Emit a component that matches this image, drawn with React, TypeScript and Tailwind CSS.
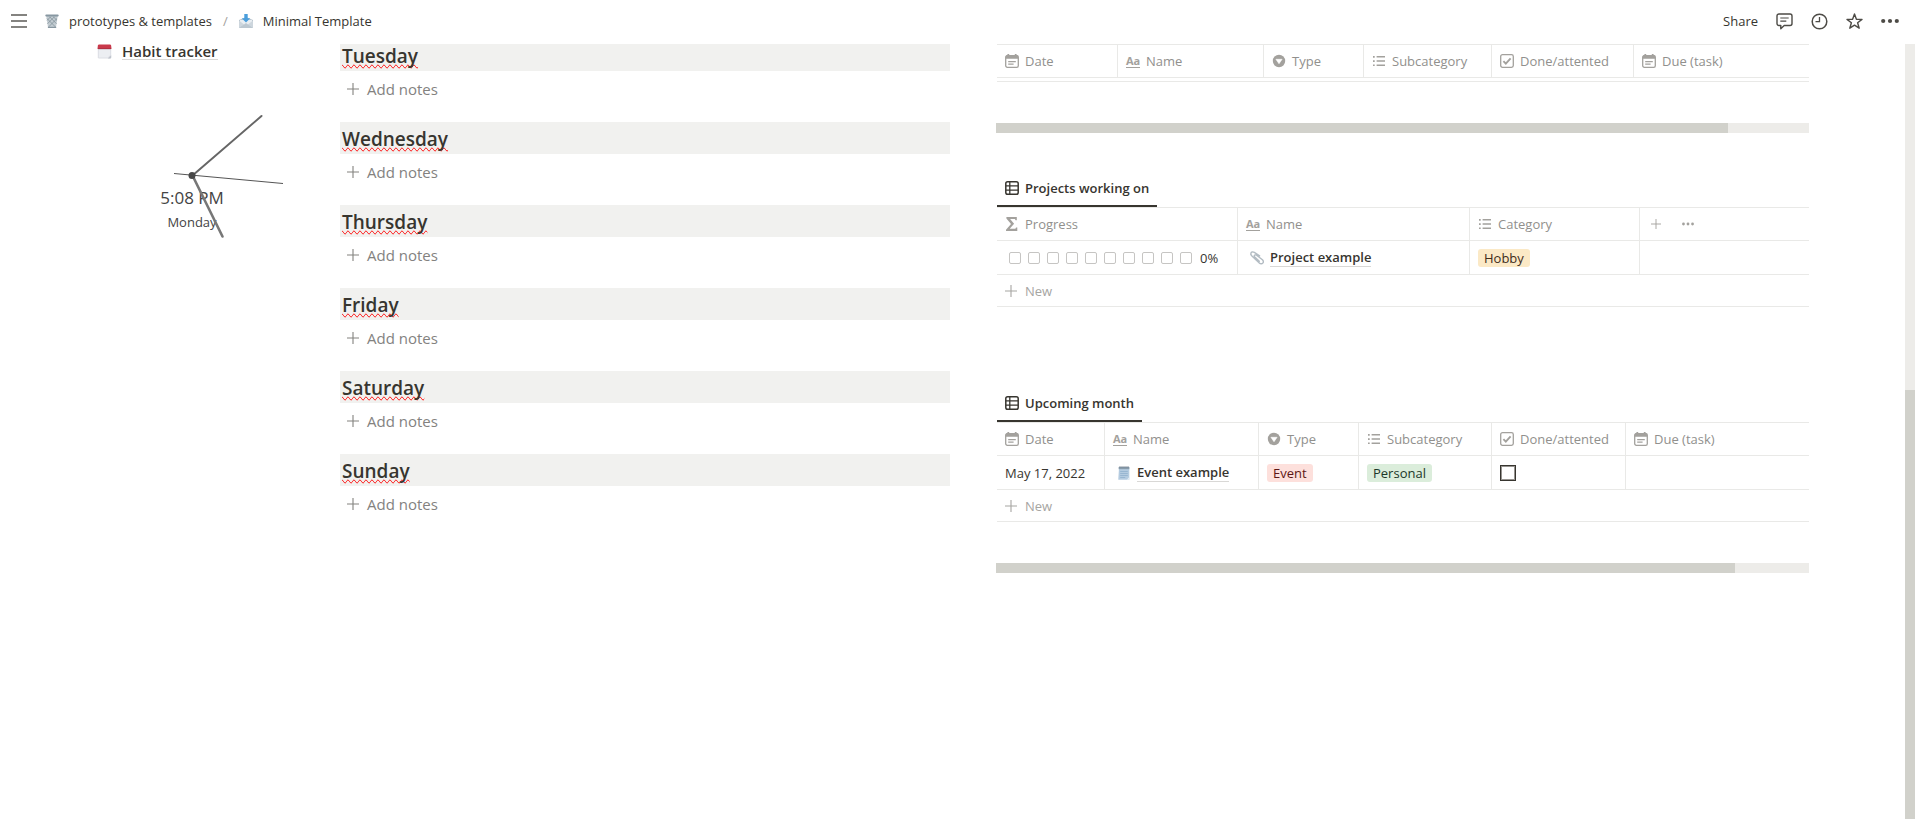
import type { ReactNode } from "react";

/* ---------- icons ---------- */

const DateIcon = () => (
  <svg className="size-3.5 shrink-0" viewBox="0 0 14 14" fill="none" aria-hidden="true">
    <rect x="0.7" y="1.7" width="12.6" height="11.6" rx="1.6" stroke="currentColor" strokeWidth="1.3" />
    <path d="M0.7 2.6C0.7 1.8 1.3 1 2.2 1h9.6c.9 0 1.5.8 1.5 1.6v2.1H.7zM2.4 0h1.8v2H2.4zM9.8 0h1.8v2H9.8z" fill="currentColor" />
    <path d="M3.2 7.6h7.6M3.2 10.1h5.4" stroke="currentColor" strokeWidth="1.1" />
  </svg>
);

const TitleIcon = () => (
  <span
    aria-hidden="true"
    className="w-3.5 shrink-0 border-b border-[#a3a19d] text-center text-[11px] leading-3 font-bold"
  >
    Aa
  </span>
);

const SelectIcon = () => (
  <svg className="size-3.5 shrink-0" viewBox="0 0 14 14" aria-hidden="true">
    <circle cx="7" cy="7" r="6.2" fill="currentColor" />
    <path d="M3.9 5.3h6.2L7 9.7z" fill="#fff" stroke="#fff" strokeWidth="0.6" strokeLinejoin="round" />
  </svg>
);

const MultiIcon = () => (
  <svg className="size-3.5 shrink-0" viewBox="0 0 14 14" aria-hidden="true">
    <path d="M1 2h1.7v1.7H1zM1 6.2h1.7v1.7H1zM1 10.4h1.7v1.7H1zM4.6 2.1H13v1.5H4.6zM4.6 6.3H13v1.5H4.6zM4.6 10.5H13v1.5H4.6z" fill="currentColor" />
  </svg>
);

const CheckIcon = () => (
  <svg className="size-3.5 shrink-0" viewBox="0 0 14 14" fill="none" stroke="currentColor" aria-hidden="true">
    <rect x="0.7" y="0.7" width="12.6" height="12.6" rx="1.8" strokeWidth="1.3" />
    <path d="M3.4 7.2l2.4 2.4 4.8-5.2" strokeWidth="1.9" />
  </svg>
);

const SigmaIcon = () => (
  <svg className="size-3.5 shrink-0" viewBox="0 0 14 14" aria-hidden="true">
    <path d="M1.4 0h10.4v3.2h-1.3l-.5-1.2H5.1l4 4.8-4.4 5h5.7l.6-1.4h1.3V14H1v-1.3l5-5.7-4.6-5.6z" fill="currentColor" />
  </svg>
);

const TableIcon = () => (
  <svg className="size-3.5 shrink-0" viewBox="0 0 14 14" fill="none" stroke="currentColor" aria-hidden="true">
    <rect x="0.8" y="0.8" width="12.4" height="12.4" rx="1.8" strokeWidth="1.5" />
    <path d="M4.8 1v12M1 4.8h12M1 9.2h12" strokeWidth="1.3" />
  </svg>
);

const PlusIcon = ({ className = "size-3" }: { className?: string }) => (
  <svg className={`${className} shrink-0`} viewBox="0 0 12 12" fill="none" stroke="currentColor" aria-hidden="true">
    <path d="M6 0v12M0 6h12" strokeWidth="1.1" />
  </svg>
);

const DotsIcon = ({ className }: { className: string }) => (
  <svg className={className} viewBox="0 0 18 6" fill="currentColor" aria-hidden="true">
    <circle cx="2.2" cy="3" r="2.1" />
    <circle cx="9" cy="3" r="2.1" />
    <circle cx="15.8" cy="3" r="2.1" />
  </svg>
);

const BasketEmoji = () => (
  <svg className="size-3.5 shrink-0" viewBox="0 0 14 14" aria-hidden="true">
    <path d="M1.2 1.6h11.6l-1.8 12H3z" fill="#c3ccd2" />
    <path d="M2 4.5l8.8 8.8M4.6 2.8l7 7M8.4 2.8l3.6 3.6M12 4.5l-8.8 8.8M9.4 2.8l-7 7M5.6 2.8L2 6.4" stroke="#7d8d95" strokeWidth="0.7" fill="none" />
    <rect x="0.3" y="0.4" width="13.4" height="2" rx="1" fill="#8797a1" />
    <path d="M2.9 12.8h8.2V14H2.9z" fill="#8796a0" />
  </svg>
);

const EnvelopeEmoji = () => (
  <svg className="size-3.5 shrink-0" viewBox="0 0 14 14" aria-hidden="true">
    <path d="M0 6l7-3 7 3v7.2c0 .5-.3.8-.8.8H.8c-.5 0-.8-.3-.8-.8z" fill="#b8c4ce" />
    <path d="M1 6h12v4L7 12 1 10z" fill="#e9eef2" />
    <path d="M0 6.4l5.4 4.4L0 14zM14 6.4l-5.4 4.4L14 14z" fill="#cdd6dd" />
    <path d="M.4 14L7 9l6.6 5z" fill="#bcc7d0" />
    <path d="M5.3 0h3.4v4.3h2.5L7 8.6 2.8 4.3h2.5z" fill="#4a9edc" />
  </svg>
);

const CalendarEmoji = () => (
  <svg className="size-[15px] shrink-0" viewBox="0 0 15 15" aria-hidden="true">
    <rect x="0.8" y="2" width="13.4" height="12.6" rx="1.4" fill="#dcdee4" />
    <path d="M1.8 5.8h11.4v5.4l-2.4 2.4h-9z" fill="#eceef2" />
    <path d="M10.8 14.6l3.4-3.4v2c0 .8-.6 1.4-1.4 1.400z" fill="#bfc4cc" />
    <path d="M2.3 .6h10.400c.9 0 1.500.6 1.500 1.400l.3 3H.5l.3-3c0-.8.6-1.400 1.500-1.400z" fill="#c9394b" />
    <path d="M1 4.300h13v.8H1z" fill="#a72d3f" />
  </svg>
);

const ClipEmoji = () => (
  <svg className="size-3.5 shrink-0" viewBox="0 0 14 14" fill="none" strokeLinecap="round" aria-hidden="true">
    <path d="M9.6 4.8L4.3 1.4C2.9.5 1.3.9.9 2.2c-.4 1.1.1 1.9 1 2.700l7.400 7c1.200 1.100 2.600 1.200 3.500.2.900-1 .6-2.300-.4-3.300L6.600 4.200c-.7-.6-1.500-.6-2 0-.5.500-.4 1.200.2 1.800l4.500 4.200" stroke="#b3bcc3" strokeWidth="1.400" />
  </svg>
);

const NotepadEmoji = () => (
  <svg className="size-3.5 shrink-0" viewBox="0 0 14 14" aria-hidden="true">
    <path d="M2 1.500h10.300v12.200H1.300z" fill="#b4cbe0" />
    <path d="M1.600 1h10.800v2.200H1.600z" fill="#93a7b7" />
    <path d="M3 0v2.600M5 0v2.600M7 0v2.600M9 0v2.600M11 0v2.600" stroke="#5f6f7b" strokeWidth="0.7" />
    <path d="M3.200 5.500h7.600M3.200 7.500h7.600M3.200 9.500h7.600M3.200 11.500h5" stroke="#8dadca" strokeWidth="0.7" />
    <path d="M9.800 13.700l2.500-2.700v2.700z" fill="#e3edf5" />
  </svg>
);

/* ---------- page parts ---------- */

type Column = { label: string; icon: () => ReactNode; width?: string };

function HeadRow({ columns, actions }: { columns: Column[]; actions?: boolean }) {
  return (
    <tr className="h-[33px]">
      {columns.map(({ label, icon: Icon, width = "" }, i) => (
        <th
          key={label}
          scope="col"
          className={`${width} border-b border-[#e9e9e7] p-0 pl-2 text-left font-normal text-[#91908d] ${
            i < columns.length - 1 || actions ? "border-r" : ""
          }`}
        >
          <span className="flex items-center gap-1.5 text-[#a3a19d]">
            <Icon />
            <span className="text-[#91908d]">{label}</span>
          </span>
        </th>
      ))}
      {actions && (
        <th className="border-b border-[#e9e9e7] p-0 pl-[11px] text-[#a3a19d]">
          <span className="flex items-center gap-5">
            <button type="button" aria-label="Add column">
              <PlusIcon className="size-2.5" />
            </button>
            <button type="button" aria-label="Column options">
              <DotsIcon className="h-1 w-3.5" />
            </button>
          </span>
        </th>
      )}
    </tr>
  );
}

const cell = "border-b border-r border-[#e9e9e7] p-0 pl-2";
const linkCell = "border-b border-r border-[#e9e9e7] p-0 pl-3";
const lastCell = "border-b border-[#e9e9e7] p-0";
const table = "w-full table-fixed border-separate border-spacing-0";

function ViewTab({ children }: { children: ReactNode }) {
  return (
    <div className="flex border-b border-[#e9e9e7]">
      <button
        type="button"
        className="flex h-[37px] items-center gap-1.5 border-b-2 border-[#37352f] px-2 font-semibold"
      >
        <TableIcon />
        {children}
      </button>
    </div>
  );
}

function NewRow() {
  return (
    <button
      type="button"
      className="flex h-8 w-full items-center gap-2 border-b border-[#e9e9e7] pl-2 text-[#a6a5a2]"
    >
      <PlusIcon />
      New
    </button>
  );
}

function Scroll({ thumb }: { thumb: string }) {
  return (
    <div className="mt-[41px] h-2.5 bg-[#edece9]">
      <div className={`${thumb} h-full bg-[#d1d1cb]`} />
    </div>
  );
}

function Tag({ color, children }: { color: string; children: ReactNode }) {
  return <span className={`${color} block h-[18px] w-fit rounded-[3px] px-1.5 leading-[18px]`}>{children}</span>;
}

function PageLink({ icon, children }: { icon: ReactNode; children: ReactNode }) {
  return (
    <a href="#page" className="flex items-center gap-1.5 font-semibold">
      {icon}
      <span className="border-b border-[#d9d8d6] leading-[18px]">{children}</span>
    </a>
  );
}

function Clock() {
  return (
    <div className="relative mt-[47px] flex h-[140px] w-48 flex-col items-center pt-20">
      <p className="text-[17px] leading-6 text-[#444]">5:08 PM</p>
      <p className="text-[13px] leading-6 text-[#444]">Monday</p>
      <svg className="absolute top-0 left-0 h-[140px] w-48" viewBox="4 0 192 140" fill="none" aria-hidden="true">
        <path d="M100.500 69.500l30 61" stroke="#777" strokeWidth="2.600" strokeLinecap="round" />
        <path d="M100.500 69.500l69-59.500" stroke="#666" strokeWidth="2" strokeLinecap="round" />
        <path d="M82 67.500l109 10" stroke="#555" strokeWidth="1" />
        <circle cx="100" cy="69.500" r="3.500" fill="#484848" />
      </svg>
    </div>
  );
}

const days = ["Tuesday", "Wednesday", "Thursday", "Friday", "Saturday", "Sunday"];

const agenda: Column[] = [
  { label: "Date", icon: DateIcon, width: "w-[121px]" },
  { label: "Name", icon: TitleIcon, width: "w-[146px]" },
  { label: "Type", icon: SelectIcon, width: "w-[100px]" },
  { label: "Subcategory", icon: MultiIcon, width: "w-[128px]" },
  { label: "Done/attented", icon: CheckIcon, width: "w-[142px]" },
  { label: "Due (task)", icon: DateIcon },
];

const projects: Column[] = [
  { label: "Progress", icon: SigmaIcon, width: "w-[241px]" },
  { label: "Name", icon: TitleIcon, width: "w-[232px]" },
  { label: "Category", icon: MultiIcon, width: "w-[170px]" },
];

const upcoming: Column[] = [
  { label: "Date", icon: DateIcon, width: "w-[108px]" },
  { label: "Name", icon: TitleIcon, width: "w-[154px]" },
  { label: "Type", icon: SelectIcon, width: "w-[100px]" },
  { label: "Subcategory", icon: MultiIcon, width: "w-[133px]" },
  { label: "Done/attented", icon: CheckIcon, width: "w-[134px]" },
  { label: "Due (task)", icon: DateIcon },
];

function TopBar() {
  return (
    <header className="flex h-11 shrink-0 items-center justify-between pr-4 pb-0.5 pl-[11px]">
      <div className="flex items-center">
        <button type="button" aria-label="Open sidebar" className="mr-[18px]">
          <svg className="h-3.5 w-4" viewBox="0 0 16 14" stroke="#5c5b57" strokeWidth="1.500" aria-hidden="true">
            <path d="M0 1h16M0 7h16M0 13h16" />
          </svg>
        </button>
        <nav aria-label="Breadcrumb" className="flex items-center gap-[11px]">
          <a href="#templates" className="flex items-center gap-2.5">
            <BasketEmoji />
            prototypes &amp; templates
          </a>
          <span className="text-[#a3a19d]">/</span>
          <a href="#minimal" className="flex items-center gap-2.5">
            <EnvelopeEmoji />
            Minimal Template
          </a>
        </nav>
      </div>
      <div className="flex items-center gap-[18px] text-[#4d4b46]">
        <button type="button" className="text-[#37352f]">Share</button>
        <button type="button" aria-label="Comments">
          <svg className="size-[17px]" viewBox="0 0 17 17" fill="none" stroke="currentColor" strokeWidth="1.400" strokeLinejoin="round" aria-hidden="true">
            <path d="M3 1h11a2 2 0 0 1 2 2v7.500a2 2 0 0 1-2 2H8.200L4.800 15.800v-3.300H3a2 2 0 0 1-2-2V3a2 2 0 0 1 2-2z" />
            <path d="M4.300 5h8.400M4.300 8.200h6" strokeWidth="1.200" />
          </svg>
        </button>
        <button type="button" aria-label="Updates">
          <svg className="size-[17px]" viewBox="0 0 17 17" fill="none" stroke="currentColor" strokeWidth="1.500" aria-hidden="true">
            <circle cx="8.500" cy="8.500" r="7.300" />
            <path d="M8.500 4v4.700H4.500" strokeWidth="1.300" />
          </svg>
        </button>
        <button type="button" aria-label="Favorite">
          <svg className="size-[17px]" viewBox="0 0 17 17" fill="none" stroke="currentColor" strokeWidth="1.400" strokeLinejoin="round" aria-hidden="true">
            <path d="M8.500 1l1.900 5.200 5.600.2-4.400 3.400 1.600 5.400-4.700-3.100-4.700 3.100 1.600-5.400L1 6.400l5.600-.2z" />
          </svg>
        </button>
        <button type="button" aria-label="More">
          <DotsIcon className="h-1.5 w-[18px]" />
        </button>
      </div>
    </header>
  );
}

export default function App() {
  return (
    <div className="flex h-screen flex-col bg-white font-['Open_Sans','Noto_Sans',sans-serif] text-[13px] leading-5 text-[#37352f]">
      <TopBar />
      <div className="flex min-h-0 flex-1">
        <main className="grid min-w-0 flex-1 grid-cols-[198fr_610fr_813fr] gap-[46px] overflow-hidden px-24">
          <div>
            <div className="flex h-[15px] items-center pl-px text-[15px]">
              <a href="#habits" className="flex items-center gap-2.5 font-semibold">
                <CalendarEmoji />
                <span className="border-b border-[#d9d8d6] leading-4">Habit tracker</span>
              </a>
            </div>
            <Clock />
          </div>

          <div className="-mt-[5px]">
            {days.map((day) => (
              <section key={day} className="h-[83px]">
                <h2 className="flex h-8 items-end bg-[#f1f1ef] pb-[3px] pl-0.5 text-[19px] leading-6 font-semibold">
                  <span className="[text-decoration-line:spelling-error]">{day}</span>
                </h2>
                <button type="button" className="flex h-9 items-center gap-2 pl-[7px] text-[15px] text-[#83827f]">
                  <PlusIcon />
                  Add notes
                </button>
              </section>
            ))}
          </div>

          <div>
            <section aria-label="Agenda">
              <div className="ml-px border-y border-[#e9e9e7] pb-[3px]">
                <table className={table}>
                  <thead>
                    <HeadRow columns={agenda} />
                  </thead>
                </table>
              </div>
              <Scroll thumb="w-9/10" />
            </section>

            <section className="mt-[37px] pl-px">
              <ViewTab>Projects working on</ViewTab>
              <table className={table}>
                <thead>
                  <HeadRow columns={projects} actions />
                </thead>
                <tbody>
                  <tr className="h-[34px]">
                    <td className={cell}>
                      <span className="flex items-center gap-2 pl-1">
                        <span className="flex gap-[7px]">
                          {Array.from({ length: 10 }, (_, i) => (
                            <span key={i} className="size-3 rounded-xs border border-[#c6c5c3]" />
                          ))}
                        </span>
                        0%
                      </span>
                    </td>
                    <td className={linkCell}>
                      <PageLink icon={<ClipEmoji />}>Project example</PageLink>
                    </td>
                    <td className={cell}>
                      <Tag color="bg-[#fbe9c6] text-[#402c1b]">Hobby</Tag>
                    </td>
                    <td className={lastCell} />
                  </tr>
                </tbody>
              </table>
              <NewRow />
            </section>

            <section className="mt-[78px]">
              <div className="pl-px">
                <ViewTab>Upcoming month</ViewTab>
                <table className={table}>
                  <thead>
                    <HeadRow columns={upcoming} />
                  </thead>
                  <tbody>
                    <tr className="h-[34px]">
                      <td className={cell}>May 17, 2022</td>
                      <td className={linkCell}>
                        <PageLink icon={<NotepadEmoji />}>Event example</PageLink>
                      </td>
                      <td className={cell}>
                        <Tag color="bg-[#fde0dc] text-[#5d1715]">Event</Tag>
                      </td>
                      <td className={cell}>
                        <Tag color="bg-[#dbeddb] text-[#1c3829]">Personal</Tag>
                      </td>
                      <td className={cell}>
                        <input
                          type="checkbox"
                          aria-label="Done/attented"
                          className="block size-4 appearance-none border border-[#37352f] shadow-[inset_0_0_0_1px_#96938f] checked:bg-[#37352f]"
                        />
                      </td>
                      <td className={lastCell} />
                    </tr>
                  </tbody>
                </table>
                <NewRow />
              </div>
              <Scroll thumb="w-10/11" />
            </section>
          </div>
        </main>

        <div className="flex w-2.5 shrink-0 flex-col bg-[#edece9]" aria-hidden="true">
          <div className="flex-[346]" />
          <div className="flex-[429] bg-[#d1d1cb]" />
        </div>
      </div>
    </div>
  );
}
